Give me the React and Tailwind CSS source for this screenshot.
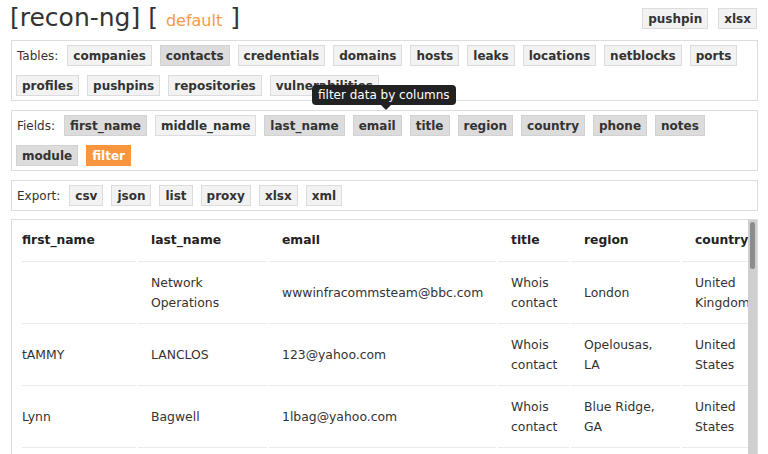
import React from "react";

const tables = [
  ["companies", false],
  ["contacts", true],
  ["credentials", false],
  ["domains", false],
  ["hosts", false],
  ["leaks", false],
  ["locations", false],
  ["netblocks", false],
  ["ports", false],
  ["profiles", false],
  ["pushpins", false],
  ["repositories", false],
  ["vulnerabilities", false],
];

const fields = [
  ["first_name", true],
  ["middle_name", false],
  ["last_name", true],
  ["email", true],
  ["title", true],
  ["region", true],
  ["country", true],
  ["phone", true],
  ["notes", true],
  ["module", true],
];

const exports = ["csv", "json", "list", "proxy", "xlsx", "xml"];

const columns = ["first_name", "last_name", "email", "title", "region", "country"];

const rows = [
  ["", "Network Operations", "wwwinfracommsteam@bbc.com", "Whois contact", "London", "United Kingdom"],
  ["tAMMY", "LANCLOS", "123@yahoo.com", "Whois contact", "Opelousas, LA", "United States"],
  ["Lynn", "Bagwell", "1lbag@yahoo.com", "Whois contact", "Blue Ridge, GA", "United States"],
  ["", "", "", "", "", ""],
];

const Btn = ({ children, active, orange }) => {
  let tone = "bg-[#f2f2f2] border-[#dcdcdc] text-[#333]";
  if (active) tone = "bg-[#dcdcdc] border-[#d2d2d2] text-[#333]";
  if (orange) tone = "bg-[#f7963e] border-[#f7963e] text-white";
  return (
    <span className={`h-[21px] px-[5px] border flex items-center text-[12px] font-bold leading-none ${tone}`}>
      {children}
    </span>
  );
};

const Box = ({ label, children, gap = "mb-[9px]" }) => (
  <div className={`ml-[11px] mr-[10px] ${gap} border border-[#dddddd] px-[4px] pt-[4px] pb-[4px] flex flex-wrap items-center gap-x-[8px] gap-y-[9px]`}>
    <span className="ml-[1px] text-[12px] text-[#333] pr-[1px]">{label}</span>
    {children}
  </div>
);

export default function App() {
  return (
    <div className="relative w-[768px] h-[454px] overflow-hidden bg-white font-['DejaVu_Sans','Liberation_Sans',sans-serif] text-[#333]">
      <div className="h-[40px] flex justify-between items-start pl-[10px] pr-[13px]">
        <div className="pt-[4px] text-[25px] leading-[28px] text-[#333] whitespace-pre">
          [recon-ng] [ <span className="text-[16px] text-[#f89a42]">default</span> ]
        </div>
        <div className="mt-[8px] mr-[-2px] flex gap-[10px]">
          <Btn>pushpin</Btn>
          <Btn>xlsx</Btn>
        </div>
      </div>

      <Box label="Tables:">
        {tables.map(([t, a]) => (
          <Btn key={t} active={a}>{t}</Btn>
        ))}
      </Box>

      <Box label="Fields:">
        {fields.map(([f, a]) => (
          <Btn key={f} active={a}>{f}</Btn>
        ))}
        <Btn orange>filter</Btn>
      </Box>

      <Box label="Export:" gap="mb-[8px]">
        {exports.map((e) => (
          <Btn key={e}>{e}</Btn>
        ))}
      </Box>

      <div className="ml-[11px] mr-[10px] h-[300px] border border-[#dddddd] flex">
        <div className="flex-1 min-w-0 overflow-hidden pl-[10px]">
          <div className="grid grid-cols-[114px_129px_227px_71px_109px_90px] gap-x-[2px] w-max">
            {columns.map((c, i) => (
              <div
                key={c}
                className={`h-[42px] border-b border-[#ebebeb] flex items-center text-[12.3px] font-bold text-[#222] whitespace-nowrap ${i === 0 ? "pr-[13px]" : "px-[13px]"}`}
              >
                {c}
              </div>
            ))}
            {rows.map((r, ri) =>
              r.map((v, ci) => (
                <div
                  key={`${ri}-${ci}`}
                  className={`h-[62px] border-b border-[#ebebeb] flex items-center text-[12.4px] leading-[20px] text-[#333] ${ci === 0 ? "pr-[13px]" : "px-[13px]"}`}
                >
                  {v}
                </div>
              ))
            )}
          </div>
        </div>
        <div className="w-[9px] bg-[#cfcfcf] flex justify-center pt-[2px]">
          <div className="w-[5px] h-[47px] rounded-full bg-[#8c8c8c]" />
        </div>
      </div>

      <div className="absolute left-[312px] top-[85px] flex flex-col items-center">
        <div className="h-[20px] px-[6px] rounded-[4px] bg-[#222] text-white text-[12px] leading-[20px] whitespace-nowrap">
          filter data by columns
        </div>
        <div className="self-start ml-[69px] w-0 h-0 border-x-[5px] border-x-transparent border-t-[5px] border-t-[#222]" />
      </div>
    </div>
  );
}
